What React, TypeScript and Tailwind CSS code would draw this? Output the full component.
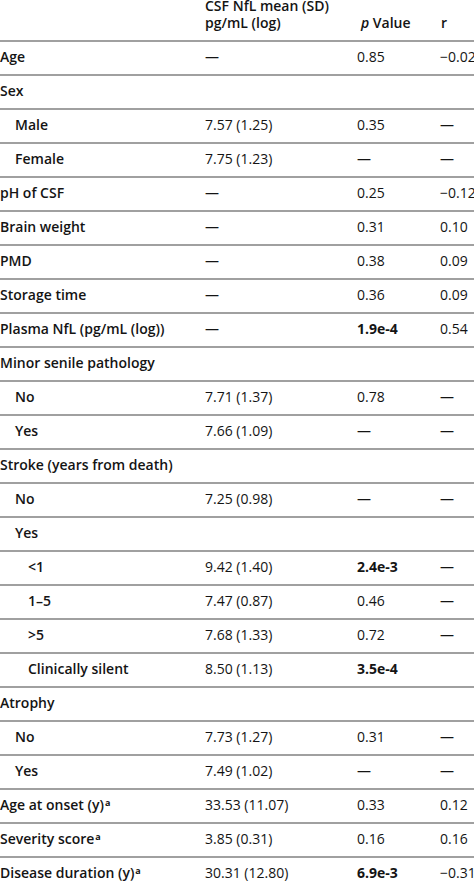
import React from 'react';

type Row = {
  label: string;
  level?: 0 | 1 | 2;
  sup?: boolean;
  mean?: string;
  p?: string;
  pBold?: boolean;
  r?: string;
};

const rows: Row[] = [
  { label: 'Age', mean: '—', p: '0.85', r: '−0.02' },
  { label: 'Sex' },
  { label: 'Male', level: 1, mean: '7.57 (1.25)', p: '0.35', r: '—' },
  { label: 'Female', level: 1, mean: '7.75 (1.23)', p: '—', r: '—' },
  { label: 'pH of CSF', mean: '—', p: '0.25', r: '−0.12' },
  { label: 'Brain weight', mean: '—', p: '0.31', r: '0.10' },
  { label: 'PMD', mean: '—', p: '0.38', r: '0.09' },
  { label: 'Storage time', mean: '—', p: '0.36', r: '0.09' },
  { label: 'Plasma NfL (pg/mL (log))', mean: '—', p: '1.9e-4', pBold: true, r: '0.54' },
  { label: 'Minor senile pathology' },
  { label: 'No', level: 1, mean: '7.71 (1.37)', p: '0.78', r: '—' },
  { label: 'Yes', level: 1, mean: '7.66 (1.09)', p: '—', r: '—' },
  { label: 'Stroke (years from death)' },
  { label: 'No', level: 1, mean: '7.25 (0.98)', p: '—', r: '—' },
  { label: 'Yes', level: 1 },
  { label: '<1', level: 2, mean: '9.42 (1.40)', p: '2.4e-3', pBold: true, r: '—' },
  { label: '1–5', level: 2, mean: '7.47 (0.87)', p: '0.46', r: '—' },
  { label: '>5', level: 2, mean: '7.68 (1.33)', p: '0.72', r: '—' },
  { label: 'Clinically silent', level: 2, mean: '8.50 (1.13)', p: '3.5e-4', pBold: true },
  { label: 'Atrophy' },
  { label: 'No', level: 1, mean: '7.73 (1.27)', p: '0.31', r: '—' },
  { label: 'Yes', level: 1, mean: '7.49 (1.02)', p: '—', r: '—' },
  { label: 'Age at onset (y)', sup: true, mean: '33.53 (11.07)', p: '0.33', r: '0.12' },
  { label: 'Severity score', sup: true, mean: '3.85 (0.31)', p: '0.16', r: '0.16' },
  { label: 'Disease duration (y)', sup: true, mean: '30.31 (12.80)', p: '6.9e-3', pBold: true, r: '−0.31' },
];

const indent = ['pl-0', 'pl-[15px]', 'pl-[28px]'];

export default function App() {
  return (
    <div
      className="w-[474px] h-[884px] overflow-hidden bg-white text-[#141414] text-[14px]"
      style={{ fontFamily: '"Open Sans", "Noto Sans", sans-serif' }}
    >
      {/* Header */}
      <div className="grid grid-cols-[205px_152px_83px_1fr] mt-[-3px] pb-[9px] border-b-2 border-[#a0a0a0] font-semibold leading-[17px] items-end">
        <div />
        <div>
          CSF NfL mean (SD)
          <br />
          pg/mL (log)
        </div>
        <div className="pl-[4px]">
          <span className="italic">p</span> Value
        </div>
        <div className="pl-px">r</div>
      </div>

      {/* Body */}
      {rows.map((row, i) => (
        <div
          key={i}
          className="grid grid-cols-[205px_152px_83px_1fr] h-[34px] border-b-2 border-[#a0a0a0] items-center pb-[3px] whitespace-nowrap"
        >
          <div className={`${indent[row.level ?? 0]} font-semibold`}>
            {row.label}
            {row.sup && <sup className="text-[9px] font-bold ml-px">a</sup>}
          </div>
          <div>{row.mean}</div>
          <div className={row.pBold ? 'font-bold' : ''}>{row.p}</div>
          <div>{row.r}</div>
        </div>
      ))}
    </div>
  );
}
